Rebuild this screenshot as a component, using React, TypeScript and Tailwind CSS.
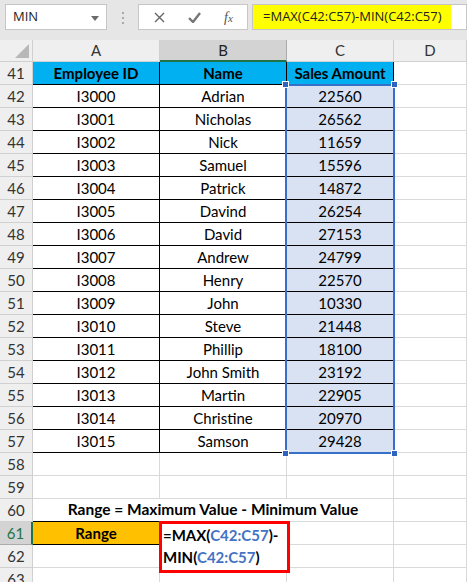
import React from 'react'

const rows = [
  ['I3000', 'Adrian', '22560'],
  ['I3001', 'Nicholas', '26562'],
  ['I3002', 'Nick', '11659'],
  ['I3003', 'Samuel', '15596'],
  ['I3004', 'Patrick', '14872'],
  ['I3005', 'Davind', '26254'],
  ['I3006', 'David', '27153'],
  ['I3007', 'Andrew', '24799'],
  ['I3008', 'Henry', '22570'],
  ['I3009', 'John', '10330'],
  ['I3010', 'Steve', '21448'],
  ['I3011', 'Phillip', '18100'],
  ['I3012', 'John Smith', '23192'],
  ['I3013', 'Martin', '22905'],
  ['I3014', 'Christine', '20970'],
  ['I3015', 'Samson', '29428'],
]

const rowHead = 'flex items-center justify-center bg-[#efefef] border-r border-b border-[#d0d0d0] text-[#333]'
const gray = 'border-r border-b border-[#d9d9d9]'

function Handle({ className }: { className: string }) {
  return <div className={`absolute w-[7px] h-[7px] bg-[#2e64c0] border border-white ${className}`} />
}

function FormulaBar() {
  return (
    <div className="flex h-[40px] items-start gap-0 bg-[#e6e6e6] pt-[4px] pl-[5px]">
      {/* name box */}
      <div className="relative flex h-[26px] w-[102px] items-center border border-[#c6c6c6] bg-white pl-[7px] font-['Open_Sans',sans-serif] text-[13px] text-[#222]">
        MIN
        <svg className="absolute right-[7px] top-[11px]" width="8" height="5" viewBox="0 0 8 5">
          <path d="M0 0h8L4 5z" fill="#6b6b6b" />
        </svg>
      </div>
      <div className="flex w-[31px] flex-col items-center gap-[3px] pt-[8px]">
        <span className="h-[2px] w-[2px] bg-[#a8a8a8]" />
        <span className="h-[2px] w-[2px] bg-[#a8a8a8]" />
        <span className="h-[2px] w-[2px] bg-[#a8a8a8]" />
      </div>
      {/* cancel / enter / fx */}
      <div className="flex h-[26px] w-[110px] items-center border border-[#c6c6c6] bg-white">
        <svg className="ml-[15px]" width="11" height="11" viewBox="0 0 11 11">
          <path d="M1 1l9 9M10 1l-9 9" stroke="#666" strokeWidth="1.4" />
        </svg>
        <svg className="ml-[23px]" width="13" height="11" viewBox="0 0 13 11">
          <path d="M1 6l4 4 7-9" stroke="#777" strokeWidth="2.4" fill="none" />
        </svg>
        <span className="ml-[23px] font-['Liberation_Serif',serif] text-[14px] italic text-[#555]">
          f<span className="text-[11px]">x</span>
        </span>
      </div>
      <div className="ml-[4px] flex h-[26px] flex-1 items-center border border-[#c6c6c6] bg-white">
        <div className="flex h-full w-[198px] items-center whitespace-nowrap bg-[#ffff00] pl-[10px] font-['Open_Sans',sans-serif] text-[13px] text-[#222]">
          =MAX(C42:C57)-MIN(C42:C57)
        </div>
      </div>
    </div>
  )
}

export default function App() {
  return (
    <div className="h-[582px] w-[467px] overflow-hidden bg-white font-[Lato,sans-serif] text-[15px] text-black">
      <FormulaBar />
      <div className="relative grid grid-cols-[33px_127px_127px_107px_73px] auto-rows-[23px] [grid-template-rows:22px]">
        {/* column headers */}
        <div className="relative bg-[#efefef] border-r border-b border-[#d0d0d0]">
          <svg className="absolute right-[3px] bottom-[3px]" width="14" height="14" viewBox="0 0 14 14">
            <path d="M14 0v14H0z" fill="#b8b8b8" />
          </svg>
        </div>
        <div className="flex items-center justify-center bg-[#efefef] border-r border-b border-[#d0d0d0] text-[#333]">A</div>
        <div className="flex items-center justify-center bg-[#d3d3d3] border-r border-[#ababab] border-b-2 border-b-[#217346] text-[#222]">B</div>
        <div className="flex items-center justify-center bg-[#efefef] border-r border-b border-[#d0d0d0] text-[#333]">C</div>
        <div className="flex items-center justify-center bg-[#efefef] border-r border-b border-[#d0d0d0] text-[#333]">D</div>

        {/* row 41: table header */}
        <div className={rowHead}>41</div>
        <div className="flex items-center justify-center bg-[#00b0f0] border-r border-b border-black font-bold">Employee ID</div>
        <div className="flex items-center justify-center bg-[#00b0f0] border-r border-b border-black font-bold">Name</div>
        <div className="flex items-center justify-center bg-[#00b0f0] border-r border-b border-black font-bold">Sales Amount</div>
        <div className={gray} />

        {rows.map(([id, name, amount], i) => (
          <React.Fragment key={id}>
            <div className={rowHead}>{42 + i}</div>
            <div className="flex items-center justify-center border-r border-b border-black">{id}</div>
            <div className="flex items-center justify-center border-r border-b border-black">{name}</div>
            <div className="flex items-center justify-center bg-[#d9e2f3] border-r border-b border-black">{amount}</div>
            <div className={gray} />
          </React.Fragment>
        ))}

        {[58, 59].map((n) => (
          <React.Fragment key={n}>
            <div className={rowHead}>{n}</div>
            <div className={gray} />
            <div className={gray} />
            <div className={gray} />
            <div className={gray} />
          </React.Fragment>
        ))}

        {/* row 60 */}
        <div className={rowHead}>60</div>
        <div className="col-span-3 flex items-center justify-center border-r border-b border-[#d9d9d9] text-[15.5px] font-bold">
          Range = Maximum Value - Minimum Value
        </div>
        <div className={gray} />

        {/* row 61 */}
        <div className="flex items-center justify-center bg-[#d3d3d3] border-r-2 border-r-[#217346] border-b border-[#ababab] text-[#217346]">61</div>
        <div className="flex items-center justify-center bg-[#ffc000] border-r border-b border-black shadow-[0_-1px_0_#000] font-bold">Range</div>
        <div className={gray} />
        <div className={gray} />
        <div className={gray} />

        {[62, 63].map((n) => (
          <React.Fragment key={n}>
            <div className={rowHead}>{n}</div>
            <div className={gray} />
            <div className={gray} />
            <div className={gray} />
            <div className={gray} />
          </React.Fragment>
        ))}

        {/* selection around C42:C57 */}
        <div className="pointer-events-none absolute left-[285px] top-[44px] h-[370px] w-[110px] border-2 border-[#3670c8]">
          <Handle className="-left-[5px] -top-[5px]" />
          <Handle className="-right-[5px] -top-[5px]" />
          <Handle className="-left-[5px] -bottom-[5px]" />
          <Handle className="-right-[5px] -bottom-[5px]" />
        </div>

        {/* in-cell editor on B61 */}
        <div className="absolute left-[159px] top-[481px] h-[52px] w-[131px] border-[3px] border-[#ff0000] bg-white pl-[1px] text-[15px] font-bold leading-[22px]">
          <div>
            =MAX(<span className="text-[#4472c4]">C42:C57</span>)-
          </div>
          <div>
            MIN(<span className="text-[#4472c4]">C42:C57</span>)
          </div>
        </div>
      </div>
    </div>
  )
}
